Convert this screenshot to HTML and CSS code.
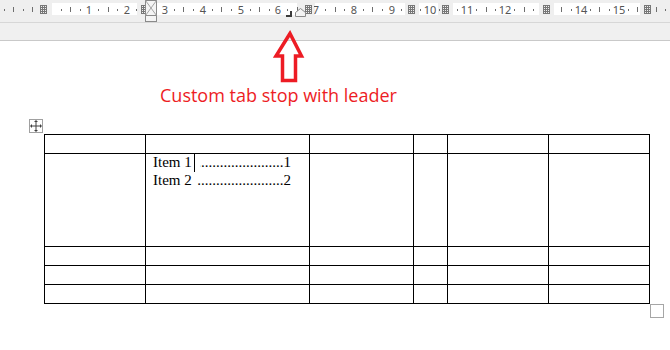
FILE: index.html
```html
<!DOCTYPE html>
<html lang="en">
<head>
    <meta charset="UTF-8">
    <meta name="viewport" content="width=device-width, initial-scale=1.0">
    <title>Custom tab stop with leader</title>
    <link rel="stylesheet" href="styles.css">
</head>
<body>
    <div class="ruler">
        <svg width="670" height="22" viewBox="0 0 670 22">
            <!-- white = text area of each cell -->
            <g fill="#fff">
                <rect x="52" y="3" width="85" height="12"/>
                <rect x="157" y="3" width="140" height="12"/>
                <rect x="315" y="3" width="90" height="12"/>
                <rect x="419" y="3" width="19" height="12"/>
                <rect x="453" y="3" width="86" height="12"/>
                <rect x="554" y="3" width="86" height="12"/>
            </g>
            <g stroke="#6e6e6e" stroke-width="1">
                <path d="M4.5 9v2M23.5 9v2M61.5 9v2M80.5 9v2M98.5 9v2M117.5 9v2M136.5 9v2M174.5 9v2M193.5 9v2M212.5 9v2M231.5 9v2M250.5 9v2M269.5 9v2M287.5 9v2M325.5 9v2M344.5 9v2M363.5 9v2M382.5 9v2M401.5 9v2M420.5 9v2M439.5 9v2M457.5 9v2M476.5 9v2M495.5 9v2M514.5 9v2M533.5 9v2M571.5 9v2M590.5 9v2M609.5 9v2M628.5 9v2M665.5 9v2"/>
                <path d="M13.5 7v5M32.5 7v5M70.5 7v5M108.5 7v5M183.5 7v5M221.5 7v5M259.5 7v5M297.5 7v5M335.5 7v5M372.5 7v5M486.5 7v5M524.5 7v5M561.5 7v5M599.5 7v5M637.5 7v5M656.5 7v5"/>
            </g>
            <g class="ruler-num" text-anchor="middle">
                <text x="89" y="14">1</text>
                <text x="127" y="14">2</text>
                <text x="165" y="14">3</text>
                <text x="203" y="14">4</text>
                <text x="241" y="14">5</text>
                <text x="278" y="14">6</text>
                <text x="316" y="14">7</text>
                <text x="354" y="14">8</text>
                <text x="392" y="14">9</text>
                <text x="430" y="14">10</text>
                <text x="467" y="14">11</text>
                <text x="505" y="14">12</text>
                <text x="581" y="14">14</text>
                <text x="619" y="14">15</text>
            </g>
            <!-- column markers -->
            <defs>
                <g id="col-mark">
                    <rect x="-5" y="3" width="11" height="13" fill="#efefef"/>
                    <path d="M-3 5.5h7M-3 7.5h7M-3 9.5h7M-3 11.5h7M-3 13.5h7M-2.5 5v9M-0.5 5v9M1.5 5v9M3.5 5v9" stroke="#777" stroke-width="1"/>
                </g>
            </defs>
            <use href="#col-mark" x="43" y="0"/>
            <use href="#col-mark" x="144" y="0"/>
            <use href="#col-mark" x="308" y="0"/>
            <use href="#col-mark" x="411" y="0"/>
            <use href="#col-mark" x="445" y="0"/>
            <use href="#col-mark" x="546" y="0"/>
            <use href="#col-mark" x="647" y="0"/>
            <!-- indent markers -->
            <rect x="145.5" y="0.5" width="11" height="21" fill="#f4f4f4" stroke="#8a8a8a"/>
            <path d="M145.5 0.5l11 15M156.5 0.5l-11 15" stroke="#a4a4a4" fill="none"/>
            <path d="M145.5 15.5h11" stroke="#8a8a8a"/>
            <!-- right tab stop -->
            <path d="M291 11v5h-5" stroke="#3a3a3a" stroke-width="2" fill="none"/>
            <!-- right indent -->
            <path d="M295.5 16.5v-4l5-4 5 4v4z" fill="#f4f4f4" stroke="#8a8a8a"/>
        </svg>
    </div>
    <div class="ruler-band"></div>

    <main class="page">
        <svg class="callout-arrow" width="36" height="58" viewBox="0 0 36 58">
            <polygon points="20,5.5 6,28 12.5,28 12.5,52.5 25.5,52.5 25.5,28 31.5,28" fill="none" stroke="#ed1c24" stroke-width="3.5"/>
        </svg>
        <p class="callout">Custom tab stop with leader</p>

        <div class="doc-table">
            <span class="move-handle">
                <svg width="12" height="12" viewBox="0 0 12 12">
                    <path d="M6 1.5v9M1.5 6h9" stroke="#404040" stroke-width="1"/>
                    <path d="M6 0l-2 2h4zM6 12l-2-2h4zM0 6l2-2v4zM12 6l-2-2v4z" fill="#404040"/>
                </svg>
            </span>
            <div class="cells">
                <div class="cell"></div>
                <div class="cell"></div>
                <div class="cell"></div>
                <div class="cell"></div>
                <div class="cell"></div>
                <div class="cell"></div>

                <div class="cell"></div>
                <div class="cell cell-text">
                    <div class="tab-line">
                        <span>Item 1</span><span class="caret"></span><span class="leader">................................................</span><span>1</span>
                    </div>
                    <div class="tab-line">
                        <span>Item 2</span><span class="leader">................................................</span><span>2</span>
                    </div>
                </div>
                <div class="cell"></div>
                <div class="cell"></div>
                <div class="cell"></div>
                <div class="cell"></div>

                <div class="cell"></div>
                <div class="cell"></div>
                <div class="cell"></div>
                <div class="cell"></div>
                <div class="cell"></div>
                <div class="cell"></div>

                <div class="cell"></div>
                <div class="cell"></div>
                <div class="cell"></div>
                <div class="cell"></div>
                <div class="cell"></div>
                <div class="cell"></div>

                <div class="cell"></div>
                <div class="cell"></div>
                <div class="cell"></div>
                <div class="cell"></div>
                <div class="cell"></div>
                <div class="cell"></div>
            </div>
            <div class="resize-handle"></div>
        </div>
    </main>
</body>
</html>
```

FILE: styles.css
```css
body {
    margin: 0;
    background: #fff;
    font-family: "Liberation Serif", serif;
    color: #000;
}

.ruler {
    height: 22px;
    background: #efefef;
    border-bottom: 1px solid #d7d7d7;
}

.ruler svg {
    display: block;
}

.ruler-num {
    font-family: "Noto Sans", sans-serif;
    font-size: 11px;
    fill: #555;
}

.ruler-band {
    height: 17px;
    background: #f0f0f0;
    border-bottom: 1px solid #c9c9c9;
}

.page {
    position: relative;
    padding-top: 42px;
    padding-bottom: 30px;
}

.callout-arrow {
    position: absolute;
    left: 270px;
    top: -13px;
}

.callout {
    margin: 0 0 27px 160px;
    font-family: "Open Sans", sans-serif;
    font-size: 18px;
    line-height: 24px;
    color: #ed1c24;
}

.doc-table {
    position: relative;
    display: inline-block;
    margin-left: 44px;
    vertical-align: top;
}

.cells {
    display: grid;
    grid-template-columns: 100px 163px 103px 33px 100px 100px;
    grid-template-rows: 18px 92px 18px 18px 18px;
    gap: 1px;
    padding: 1px;
    background: #000;
}

.cell {
    background: #fff;
}

.cell-text {
    padding: 0 7px;
    font-size: 15px;
    line-height: 17.25px;
}

.tab-line {
    display: flex;
    width: 138px;
    white-space: nowrap;
}

.leader {
    flex: 1;
    overflow: hidden;
    direction: rtl;
    margin-left: 5px;
}

.caret {
    width: 1px;
    height: 18px;
    background: #000;
    margin-left: 2px;
}

.move-handle {
    position: absolute;
    left: -15px;
    top: -15px;
    width: 12px;
    height: 12px;
    border: 1px solid #a0a0a0;
    background: #fff;
    display: flex;
}

.resize-handle {
    position: absolute;
    left: 100%;
    top: 100%;
    width: 12px;
    height: 12px;
    border: 1px solid #a6a6a6;
    background: #fff;
}
```
